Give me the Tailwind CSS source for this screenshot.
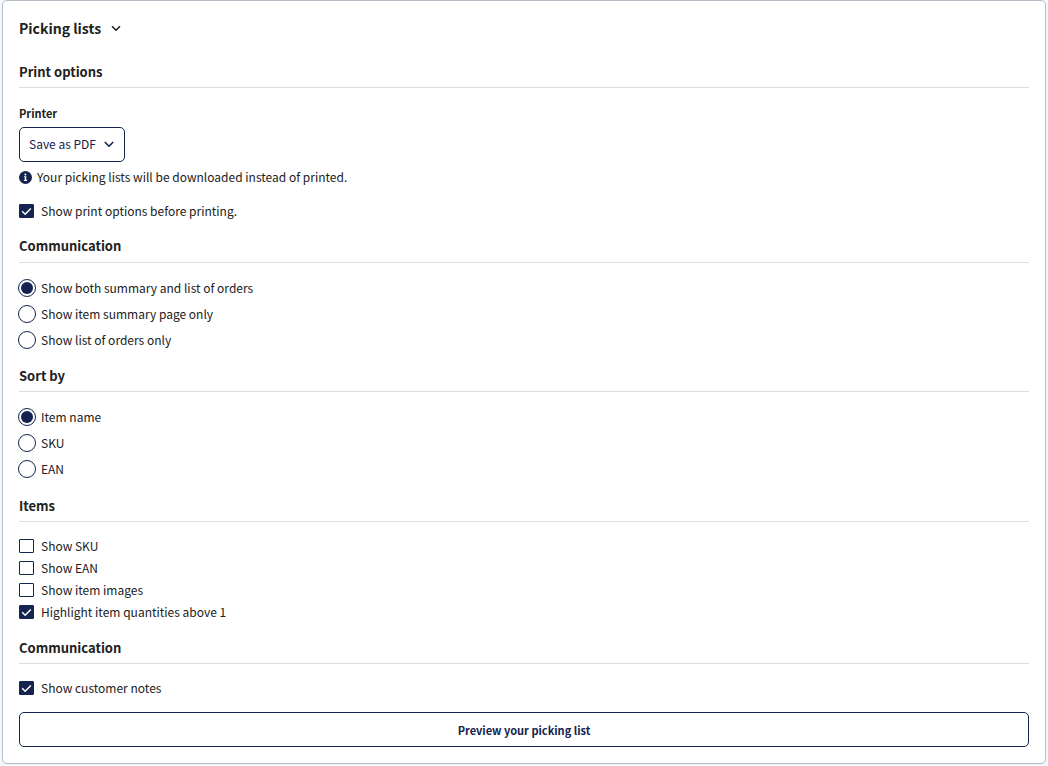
<!DOCTYPE html>
<html lang="en">
<head>
  <meta charset="UTF-8">
  <meta name="viewport" content="width=device-width, initial-scale=1.0">
  <title>Picking lists</title>
  <script src="https://cdn.jsdelivr.net/npm/@tailwindcss/browser@4"></script>
</head>
<body class="bg-[#f1f7fd] px-[2px] font-['Noto_Sans_CJK_SC',sans-serif] text-[12px] leading-5 text-[#212121]">
  <main class="bg-white border border-[#b5bcc6] rounded-[5px] p-4">
    <header class="flex items-center gap-[7px] mb-[23px]">
      <h1 class="text-[14px] leading-[22px] font-bold">Picking lists</h1>
      <button type="button" aria-label="Collapse picking lists" class="flex w-4 h-4 items-center justify-center">
        <svg class="w-4 h-4" viewBox="0 0 16 16" fill="none" stroke="#1c1c1c" stroke-width="1.5"><path d="M4 6.200l4 4 4-4"/></svg>
      </button>
    </header>

    <!-- Print options -->
    <section class="mb-[15px]">
      <h2 class="text-[13px] font-bold pb-[5px] border-b border-[#dedede] mb-[15px]">Print options</h2>
      <label for="printer" class="block text-[11px] leading-5 font-bold mb-1">Printer</label>
      <div class="relative w-fit mb-[5px]">
        <select id="printer" class="block appearance-none h-[35px] w-[106px] pl-[9px] pr-7 pb-px border border-[#14234f] rounded-[5px] bg-white text-[#14234f]">
          <option>Save as PDF</option>
        </select>
        <svg class="absolute right-2 top-[9px] w-4 h-4 pointer-events-none" viewBox="0 0 16 16" fill="none" stroke="#14234f" stroke-width="1.6"><path d="M3.800 6l4.200 4.200L12.200 6"/></svg>
      </div>
      <p class="flex items-center gap-[5px] mb-[14px]">
        <svg class="w-[13px] h-[13px]" viewBox="0 0 13 13">
          <circle cx="6.500" cy="6.500" r="6.500" fill="#14234f"/>
          <circle cx="6.400" cy="3.500" r="1" fill="#fff"/>
          <path d="M5 5.300h2.300v3.700h.8v1H4.900v-1h.8V6.300H5z" fill="#fff"/>
        </svg>
        Your picking lists will be downloaded instead of printed.
      </p>
      <label class="flex items-center gap-[7px]">
        <span class="relative">
          <input type="checkbox" checked class="peer block appearance-none w-[15px] h-[14px] border border-[#14234f] rounded-[1px] checked:bg-[#14234f]">
          <svg class="absolute inset-0 w-[15px] h-[14px] pointer-events-none invisible peer-checked:visible" viewBox="0 0 15 14" fill="none" stroke="#fff" stroke-width="1.5"><path d="M3.200 7.200l3 3 5.600-5.800"/></svg>
        </span>
        Show print options before printing.
      </label>
    </section>

    <!-- Communication -->
    <section class="mb-[13px]">
      <h2 class="text-[13px] font-bold pb-[6px] border-b border-[#dedede] mb-3">Communication</h2>
      <div class="-ml-px leading-[26px]">
        <label class="flex items-center gap-[5px]">
          <input type="radio" name="layout" checked class="appearance-none w-[18px] h-[18px] border border-[#14234f] rounded-full p-[2px] bg-clip-content checked:bg-[#14234f]">
          Show both summary and list of orders
        </label>
        <label class="flex items-center gap-[5px]">
          <input type="radio" name="layout" class="appearance-none w-[18px] h-[18px] border border-[#14234f] rounded-full p-[2px] bg-clip-content checked:bg-[#14234f]">
          Show item summary page only
        </label>
        <label class="flex items-center gap-[5px]">
          <input type="radio" name="layout" class="appearance-none w-[18px] h-[18px] border border-[#14234f] rounded-full p-[2px] bg-clip-content checked:bg-[#14234f]">
          Show list of orders only
        </label>
      </div>
    </section>

    <!-- Sort by -->
    <section class="mb-[14px]">
      <h2 class="text-[13px] font-bold pb-[5px] border-b border-[#dedede] mb-3">Sort by</h2>
      <div class="-ml-px leading-[26px]">
        <label class="flex items-center gap-[5px]">
          <input type="radio" name="sort" checked class="appearance-none w-[18px] h-[18px] border border-[#14234f] rounded-full p-[2px] bg-clip-content checked:bg-[#14234f]">
          Item name
        </label>
        <label class="flex items-center gap-[5px]">
          <input type="radio" name="sort" class="appearance-none w-[18px] h-[18px] border border-[#14234f] rounded-full p-[2px] bg-clip-content checked:bg-[#14234f]">
          SKU
        </label>
        <label class="flex items-center gap-[5px]">
          <input type="radio" name="sort" class="appearance-none w-[18px] h-[18px] border border-[#14234f] rounded-full p-[2px] bg-clip-content checked:bg-[#14234f]">
          EAN
        </label>
      </div>
    </section>

    <!-- Items -->
    <section class="mb-[15px]">
      <h2 class="text-[13px] font-bold pb-[5px] border-b border-[#dedede] mb-[13px]">Items</h2>
      <div class="leading-[22px]">
        <label class="flex items-center gap-[7px]">
          <span class="relative">
            <input type="checkbox" class="peer block appearance-none w-[15px] h-[14px] border border-[#14234f] rounded-[1px] checked:bg-[#14234f]">
            <svg class="absolute inset-0 w-[15px] h-[14px] pointer-events-none invisible peer-checked:visible" viewBox="0 0 15 14" fill="none" stroke="#fff" stroke-width="1.5"><path d="M3.200 7.200l3 3 5.600-5.800"/></svg>
          </span>
          Show SKU
        </label>
        <label class="flex items-center gap-[7px]">
          <span class="relative">
            <input type="checkbox" class="peer block appearance-none w-[15px] h-[14px] border border-[#14234f] rounded-[1px] checked:bg-[#14234f]">
            <svg class="absolute inset-0 w-[15px] h-[14px] pointer-events-none invisible peer-checked:visible" viewBox="0 0 15 14" fill="none" stroke="#fff" stroke-width="1.5"><path d="M3.200 7.200l3 3 5.600-5.800"/></svg>
          </span>
          Show EAN
        </label>
        <label class="flex items-center gap-[7px]">
          <span class="relative">
            <input type="checkbox" class="peer block appearance-none w-[15px] h-[14px] border border-[#14234f] rounded-[1px] checked:bg-[#14234f]">
            <svg class="absolute inset-0 w-[15px] h-[14px] pointer-events-none invisible peer-checked:visible" viewBox="0 0 15 14" fill="none" stroke="#fff" stroke-width="1.5"><path d="M3.200 7.200l3 3 5.600-5.800"/></svg>
          </span>
          Show item images
        </label>
        <label class="flex items-center gap-[7px]">
          <span class="relative">
            <input type="checkbox" checked class="peer block appearance-none w-[15px] h-[14px] border border-[#14234f] rounded-[1px] checked:bg-[#14234f]">
            <svg class="absolute inset-0 w-[15px] h-[14px] pointer-events-none invisible peer-checked:visible" viewBox="0 0 15 14" fill="none" stroke="#fff" stroke-width="1.5"><path d="M3.200 7.200l3 3 5.600-5.800"/></svg>
          </span>
          Highlight item quantities above 1
        </label>
      </div>
    </section>

    <!-- Customer notes -->
    <section class="mb-[13px]">
      <h2 class="text-[13px] font-bold pb-[5px] border-b border-[#dedede] mb-[13px]">Communication</h2>
      <label class="flex items-center gap-[7px] leading-[22px]">
        <span class="relative">
          <input type="checkbox" checked class="peer block appearance-none w-[15px] h-[14px] border border-[#14234f] rounded-[1px] checked:bg-[#14234f]">
          <svg class="absolute inset-0 w-[15px] h-[14px] pointer-events-none invisible peer-checked:visible" viewBox="0 0 15 14" fill="none" stroke="#fff" stroke-width="1.5"><path d="M3.200 7.200l3 3 5.600-5.800"/></svg>
        </span>
        Show customer notes
      </label>
    </section>

    <button type="button" class="block w-full h-[35px] border border-[#14234f] rounded-[5px] text-[11px] font-bold text-[#14234f]">Preview your picking list</button>
  </main>
</body>
</html>
